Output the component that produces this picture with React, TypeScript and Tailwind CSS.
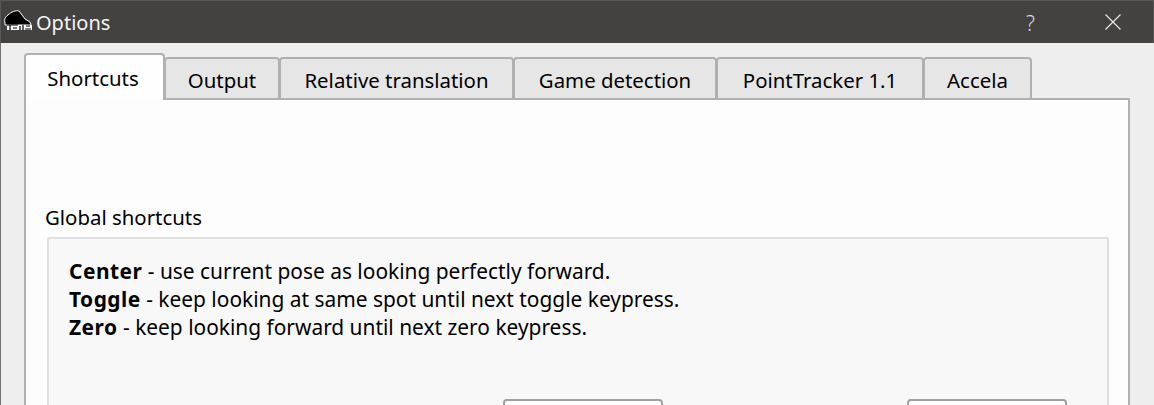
import React from "react";

const tabs = [
  { label: "Output", w: "w-[116px]" },
  { label: "Relative translation", w: "w-[235px]" },
  { label: "Game detection", w: "w-[204px]" },
  { label: "PointTracker 1.1", w: "w-[208px]" },
  { label: "Accela", w: "w-[109px]" },
];

function Logo() {
  return (
    <svg width="32" height="32" viewBox="0 0 32 32" className="shrink-0">
      <path d="M5 22c-1-3 0-6 3-8 3-3 8-5 11-4l3 4 3 4 5 3 1 3H5z" fill="#000" stroke="#fff" strokeWidth="1" />
      <path d="M7 24h25v5H7z" fill="#fff" />
      <path d="M7 24h11M10 24v5M13 27h4M20 25v4M23 24v5M26 25h4M25 28h6" stroke="#000" strokeWidth="1.2" />
    </svg>
  );
}

export default function App() {
  return (
    <div className="h-[405px] w-[1154px] overflow-hidden bg-[#eeeeee] font-['Noto_Sans','Open_Sans',sans-serif] text-[20.4px] text-black">
      <div className="flex h-[43px] items-center border-t border-l border-r border-[#5a5856] bg-[#444240] text-[#f4f4f4]">
        <div className="-ml-[1px] mb-[10px] w-[36px]">
          <Logo />
        </div>
        <span className="mt-[2px] text-[20px] leading-[24px]">Options</span>
        <span className="ml-auto mr-[69px] mt-[1px] text-[21px] font-light leading-[24px] text-[#d8d8d8]">?</span>
        <svg width="18" height="18" viewBox="0 0 18 18" className="mr-[31px]" fill="none" stroke="#e8e8e8" strokeWidth="1.2">
          <path d="M1.5 1.5l15 15M16.5 1.5l-15 15" />
        </svg>
      </div>
      <div className="flex h-[362px] flex-col border-l border-[#707070] pl-[23px] pr-[24px] pt-[10px]">
        <div className="relative z-10 flex h-[47px] items-end">
          <div className="flex h-[47px] w-[141px] items-center justify-center rounded-t-[4px] border-x-2 border-t-2 border-[#b0b0b0] bg-[#fefefe] pr-[3px] pt-[2px]">
            Shortcuts
          </div>
          {tabs.map((t) => (
            <div
              key={t.label}
              className={`-ml-[1px] flex h-[43px] items-center justify-center rounded-t-[4px] border-x-2 border-y-2 border-[#b0b0b0] bg-[#e6e6e6] pt-[3px] first:ml-0 ${t.w}`}
            >
              {t.label}
            </div>
          ))}
        </div>
        <div className="-mt-[2px] flex-1 border-2 border-[#b0b0b0] bg-[#fdfdfd] pl-[21px] pr-[19px] pt-[103px]">
          <div className="mb-[6px] -ml-[2px] leading-[28px]">Global shortcuts</div>
          <div className="h-[300px] rounded-[2px] border-2 border-[#e0e0e0] bg-[#f8f8f8] pl-[20px] pr-[40px] pt-[18px] text-[20.9px]">
            <div className="leading-[28px]">
              <div><b className="tracking-[0.5px]">Center</b> - use current pose as looking perfectly forward.</div>
              <div><b className="tracking-[0.5px]">Toggle</b> - keep looking at same spot until next toggle keypress.</div>
              <div><b className="tracking-[0.5px]">Zero</b> - keep looking forward until next zero keypress.</div>
            </div>
            <div className="mt-[58px] flex justify-end gap-[244px]">
              <div className="h-[40px] w-[160px] rounded-[4px] border-2 border-[#a0a0a0] bg-white" />
              <div className="h-[40px] w-[160px] rounded-[4px] border-2 border-[#a0a0a0] bg-white" />
            </div>
          </div>
        </div>
      </div>
    </div>
  );
}
